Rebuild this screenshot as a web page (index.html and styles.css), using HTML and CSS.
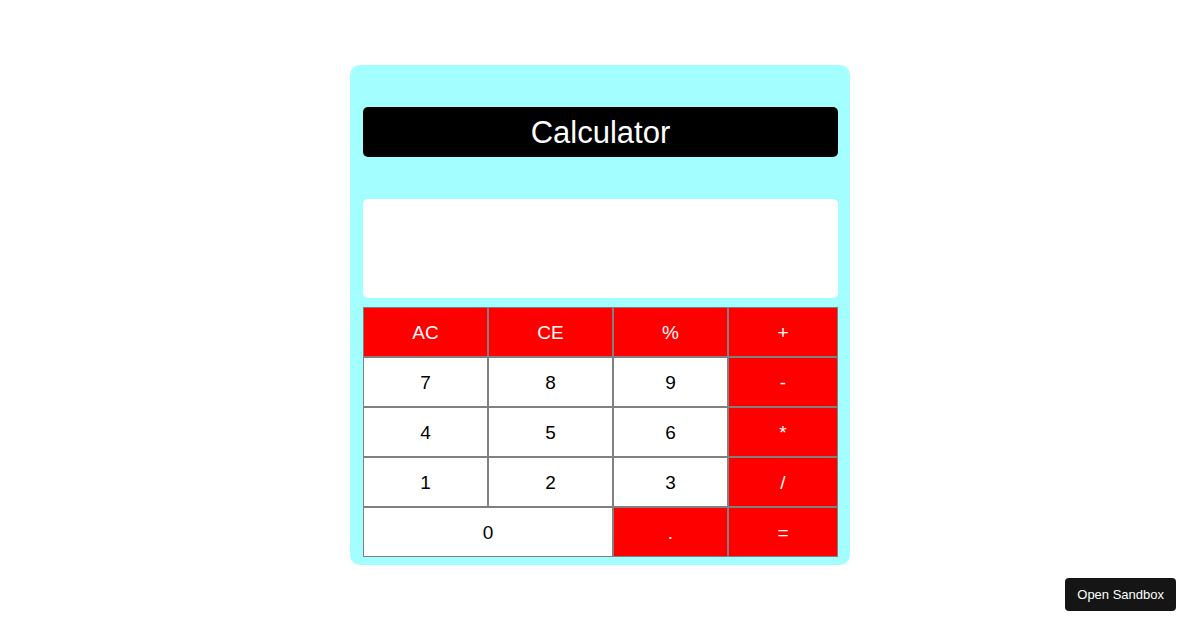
FILE: index.html
```html
<!DOCTYPE html>
<html>
<head>
<meta charset="utf-8">
<link rel="stylesheet" href="styles.css">
</head>
<body>
<div class="page">
  <div class="calc">
    <h1 class="title">Calculator</h1>
    <div class="display"></div>
    <div class="keys">
      <div class="key op">AC</div>
      <div class="key op">CE</div>
      <div class="key op">%</div>
      <div class="key op">+</div>
      <div class="key">7</div>
      <div class="key">8</div>
      <div class="key">9</div>
      <div class="key op">-</div>
      <div class="key">4</div>
      <div class="key">5</div>
      <div class="key">6</div>
      <div class="key op">*</div>
      <div class="key">1</div>
      <div class="key">2</div>
      <div class="key">3</div>
      <div class="key op">/</div>
      <div class="key zero">0</div>
      <div class="key op">.</div>
      <div class="key op">=</div>
    </div>
  </div>
</div>
<button class="sandbox">Open Sandbox</button>
</body>
</html>
```

FILE: styles.css
```css
html, body {
  margin: 0;
  padding: 0;
  background: #ffffff;
  font-family: "Liberation Sans", Arial, sans-serif;
}
.page {
  display: flex;
  justify-content: center;
  padding-top: 65px;
}
.calc {
  width: 500px;
  box-sizing: border-box;
  background: #a3ffff;
  border-radius: 10px;
  padding: 42px 12px 8px 13px;
}
.title {
  margin: 0 0 42px 0;
  height: 50px;
  box-sizing: border-box;
  padding-top: 1px;
  background: #000000;
  color: #ffffff;
  border-radius: 5px;
  font-weight: normal;
  font-size: 31px;
  line-height: 49px;
  text-align: center;
}
.display {
  height: 99px;
  background: #ffffff;
  border-radius: 5px;
  margin-bottom: 9px;
}
.keys {
  display: grid;
  grid-template-columns: 125px 125px 115px 110px;
  grid-auto-rows: 50px;
}
.key {
  box-sizing: border-box;
  border: 1px solid #808080;
  padding-top: 1px;
  background: #ffffff;
  color: #000000;
  font-size: 19px;
  display: flex;
  align-items: center;
  justify-content: center;
}
.key.op {
  background: #ff0000;
  color: #ffffff;
}
.key.zero {
  grid-column: span 2;
}
.sandbox {
  position: fixed;
  right: 24px;
  bottom: 19px;
  height: 33px;
  padding: 0 12px;
  background: #151515;
  color: #ffffff;
  border: none;
  border-radius: 4px;
  font-family: "Liberation Sans", Arial, sans-serif;
  font-size: 13px;
}
```
